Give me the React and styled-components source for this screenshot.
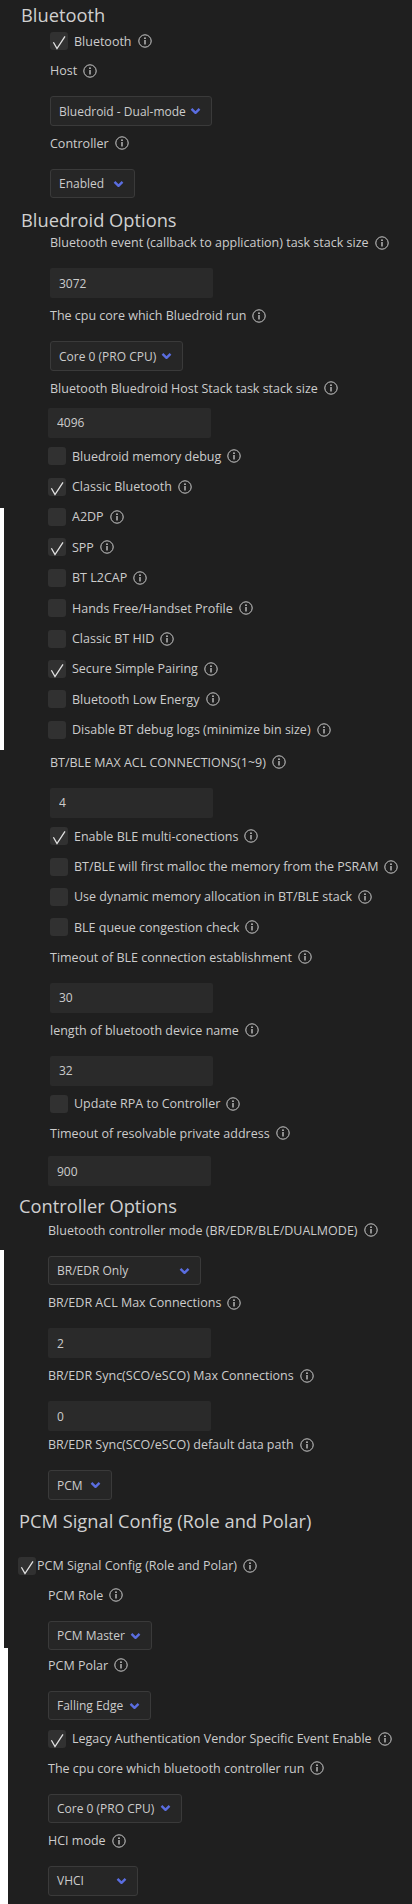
import React from 'react';
import styled, { createGlobalStyle } from 'styled-components';

const Global = createGlobalStyle`
  html, body { margin: 0; padding: 0; background: #1f1f1f; }
  body { font-family: "Open Sans", "Noto Sans", sans-serif; color: #cccccc; }
  * { box-sizing: border-box; }
`;

const Page = styled.main`
  min-height: 1904px;
  display: flex;
  flex-direction: column;
  background:
    linear-gradient(#ffffff, #ffffff) 0 508px / 4px 242px no-repeat,
    linear-gradient(#ffffff, #ffffff) 0 1250px / 4px 398px no-repeat,
    linear-gradient(#ffffff, #ffffff) 0 1648px / 8px 256px no-repeat,
    #1f1f1f;
`;

const Segment = styled.section`
  display: flex;
  flex-direction: column;
  align-items: flex-start;
  padding-left: ${p => p.$x}px;
`;

const Heading = styled.h2`
  margin: ${p => p.$mt}px 0 0 -29px;
  height: 22px;
  font-size: 18.3px;
  font-weight: 400;
  line-height: 22px;
  color: #d0d0d0;
  white-space: nowrap;
`;

const LabelRow = styled.div`
  display: flex;
  align-items: center;
  gap: 6px;
  height: 24px;
  margin-top: ${p => (p.$mt ?? 2.5)}px;
  font-size: 12.5px;
  white-space: nowrap;
`;

const ClipRow = styled.div`
  height: 20px;
  margin-top: 2.5px;
  overflow: hidden;
`;

const CheckRow = styled.div`
  display: flex;
  align-items: center;
  gap: 6px;
  height: 30.4px;
  margin-top: ${p => p.$mt || 0}px;
  margin-left: ${p => p.$ml || 0}px;
  font-size: 12.5px;
  white-space: nowrap;
`;

const Box = styled.span`
  flex: none;
  width: 18px;
  height: 18px;
  margin-right: ${p => (p.$tight ? -5 : 0)}px;
  border-radius: 3px;
  background: #313131;
  svg { display: block; }
`;

const TextInput = styled.input`
  display: block;
  width: 163px;
  height: 30px;
  margin: ${p => (p.$mt ?? 13.5)}px 0 3px;
  padding: 0 9px;
  border: none;
  border-radius: 2px;
  background: #2a2a2a;
  color: #cccccc;
  font-family: "Open Sans", sans-serif;
  font-size: 12px;
  outline: none;
`;

const Select = styled.div`
  display: flex;
  align-items: center;
  justify-content: space-between;
  width: ${p => p.$w}px;
  height: 29.5px;
  margin: ${p => (p.$mt ?? 13.5)}px 0 3px;
  padding: 0 10px 0 8px;
  border: 1px solid #3a3a3a;
  border-radius: 3px;
  background: #262626;
  font-size: 12px;
  white-space: nowrap;
  svg { flex: none; }
`;

const Info = () => (
  <svg width="14" height="14" viewBox="0 0 14 14" fill="none">
    <circle cx="7" cy="7" r="6.2" stroke="#cccccc" strokeWidth="1" />
    <circle cx="7" cy="4.2" r="0.85" fill="#cccccc" />
    <path d="M7 6.1V10.4" stroke="#cccccc" strokeWidth="1.3" />
  </svg>
);

const Chevron = () => (
  <svg width="11" height="8" viewBox="0 0 11 8" fill="none">
    <path d="M1.5 1.8L5.5 5.8L9.5 1.8" stroke="#5a6de0" strokeWidth="2.4" strokeLinejoin="round" />
  </svg>
);

const Tick = () => (
  <svg width="18" height="18" viewBox="0 0 18 18" fill="none">
    <path d="M3.4 10.3L7 16.6L15 4.4" stroke="#e2e2e2" strokeWidth="1.3" />
  </svg>
);

const Label = ({ children, mt }) => (
  <LabelRow $mt={mt}>
    <span>{children}</span>
    <Info />
  </LabelRow>
);

const Check = ({ children, on, mt, ml, tight }) => (
  <CheckRow $mt={mt} $ml={ml}>
    <Box $tight={tight}>{on && <Tick />}</Box>
    <span>{children}</span>
    <Info />
  </CheckRow>
);

const Drop = ({ value, w, mt }) => (
  <Select $w={w} $mt={mt}>
    <span>{value}</span>
    <Chevron />
  </Select>
);

const Num = ({ value, mt }) => <TextInput $mt={mt} defaultValue={value} readOnly />;

export default function App() {
  return (
    <Page>
      <Global />
      <Segment $x={50}>
        <Heading $mt={4}>Bluetooth</Heading>
        <Check on>Bluetooth</Check>
        <Label>Host</Label>
        <Drop value="Bluedroid - Dual-mode" w={162} />
        <Label>Controller</Label>
        <Drop value="Enabled" w={85} />
        <Heading $mt={7.5}>Bluedroid Options</Heading>
        <Label mt={0}>Bluetooth event (callback to application) task stack size</Label>
        <Num value="3072" />
        <Label>The cpu core which Bluedroid run</Label>
        <Drop value="Core 0 (PRO CPU)" w={133} />
        <Label>Bluetooth Bluedroid Host Stack task stack size</Label>
      </Segment>

      <Segment $x={48}>
        <Num value="4096" mt={7.6} />
        <Check>Bluedroid memory debug</Check>
        <Check on>Classic Bluetooth</Check>
        <Check>A2DP</Check>
        <Check on>SPP</Check>
        <Check>BT L2CAP</Check>
        <Check>Hands Free/Handset Profile</Check>
        <Check>Classic BT HID</Check>
        <Check on>Secure Simple Pairing</Check>
        <Check>Bluetooth Low Energy</Check>
        <Check>Disable BT debug logs (minimize bin size)</Check>
      </Segment>

      <Segment $x={50}>
        <Label mt={5.6}>BT/BLE MAX ACL CONNECTIONS(1~9)</Label>
        <Num value="4" />
        <Check on>Enable BLE multi-conections</Check>
        <Check>BT/BLE will first malloc the memory from the PSRAM</Check>
        <Check>Use dynamic memory allocation in BT/BLE stack</Check>
        <Check>BLE queue congestion check</Check>
        <Label>Timeout of BLE connection establishment</Label>
        <Num value="30" />
        <Label>length of bluetooth device name</Label>
        <Num value="32" />
        <Check>Update RPA to Controller</Check>
        <Label>Timeout of resolvable private address</Label>
      </Segment>

      <Segment $x={48}>
        <Num value="900" mt={11} />
        <Heading $mt={6}>Controller Options</Heading>
        <Label mt={1}>Bluetooth controller mode (BR/EDR/BLE/DUALMODE)</Label>
        <Drop value="BR/EDR Only" w={153} />
        <Label>BR/EDR ACL Max Connections</Label>
        <Num value="2" />
        <Label>BR/EDR Sync(SCO/eSCO) Max Connections</Label>
        <Num value="0" />
        <ClipRow>
          <Label mt={-4}>BR/EDR Sync(SCO/eSCO) default data path</Label>
        </ClipRow>
        <Drop value="PCM" w={64} />
        <Heading $mt={7.5}>PCM Signal Config (Role and Polar)</Heading>
        <Check on mt={18} ml={-30} tight>PCM Signal Config (Role and Polar)</Check>
        <Label>PCM Role</Label>
        <Drop value="PCM Master" w={104} />
      </Segment>

      <Segment $x={48}>
        <Label mt={0}>PCM Polar</Label>
        <Drop value="Falling Edge" w={103} />
        <Check on>Legacy Authentication Vendor Specific Event Enable</Check>
        <Label>The cpu core which bluetooth controller run</Label>
        <Drop value="Core 0 (PRO CPU)" w={134} />
        <Label>HCI mode</Label>
        <Drop value="VHCI" w={90} />
      </Segment>
    </Page>
  );
}
